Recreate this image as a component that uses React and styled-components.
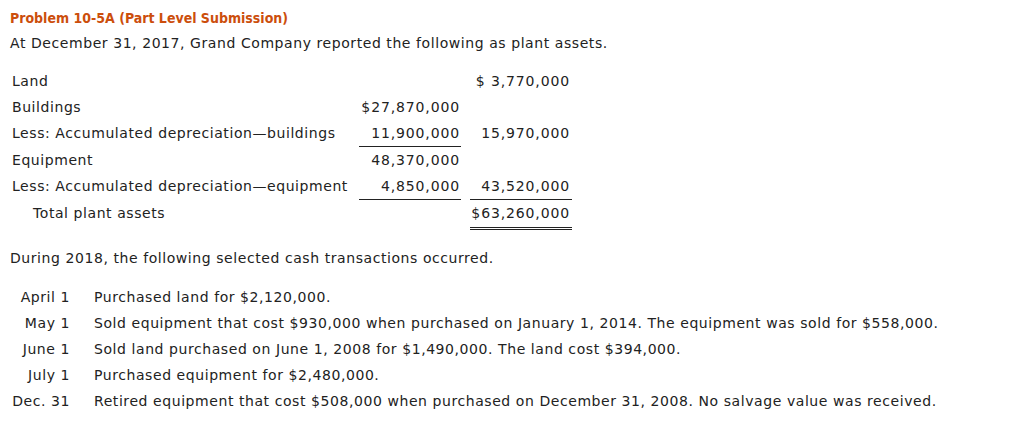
import React from "react";
import styled, { createGlobalStyle } from "styled-components";

const Global = createGlobalStyle`
  html, body { margin: 0; padding: 0; background: #fff; }
  body {
    font-family: Verdana, "DejaVu Sans", sans-serif;
    font-size: 14px;
    letter-spacing: 0.57px;
    color: #222;
  }
`;

const Page = styled.div`
  padding: 8px 10px;
`;

const Title = styled.h2`
  margin: 0;
  font-family: "DejaVu Sans Condensed", "DejaVu Sans", sans-serif;
  font-size: 14px;
  letter-spacing: 0;
  font-weight: bold;
  color: #cc4e0c;
  line-height: 20px;
`;

const Para = styled.p`
  margin: ${(p) => p.$mt || 0}px 0 0 0;
  line-height: 20px;
`;

const Table = styled.div`
  display: grid;
  grid-template-columns: 338px 102px 102px;
  column-gap: 9px;
  margin: 15px 0 0 2px;
  width: max-content;
`;

const Cell = styled.div`
  height: 26px;
  line-height: 26px;
  box-sizing: border-box;
  white-space: nowrap;
  padding-left: ${(p) => p.$indent || 0}px;
`;

const Num = styled(Cell)`
  text-align: right;
  letter-spacing: 0.87px;
  padding-right: ${(p) => p.$pr ?? 1}px;
  border-bottom: ${(p) => (p.$rule ? "1px solid #222" : "none")};
  height: ${(p) => (p.$rule ? 27 : 26)}px;
`;

const Total = styled(Num)`
  border-bottom: 3px double #222;
  height: 30px;
  line-height: 27px;
`;

const Tx = styled.div`
  display: grid;
  grid-template-columns: 60px auto;
  column-gap: 24px;
  margin-top: 16px;
`;

const Date = styled.div`
  text-align: right;
  line-height: 26px;
  white-space: nowrap;
`;

const Desc = styled.div`
  line-height: 26px;
  white-space: nowrap;
`;

const rows = [
  { label: "Land", a: "", b: "$ 3,770,000" },
  { label: "Buildings", a: "$27,870,000", b: "" },
  { label: "Less: Accumulated depreciation\u2014buildings", a: "11,900,000", b: "15,970,000", ruleA: true },
  { label: "Equipment", a: "48,370,000", b: "" },
  { label: "Less: Accumulated depreciation\u2014equipment", a: "4,850,000", b: "43,520,000", ruleA: true, ruleB: true },
];

const tx = [
  ["April 1", "Purchased land for $2,120,000."],
  ["May 1", "Sold equipment that cost $930,000 when purchased on January 1, 2014. The equipment was sold for $558,000."],
  ["June 1", "Sold land purchased on June 1, 2008 for $1,490,000. The land cost $394,000."],
  ["July 1", "Purchased equipment for $2,480,000."],
  ["Dec. 31", "Retired equipment that cost $508,000 when purchased on December 31, 2008. No salvage value was received."],
];

export default function App() {
  return (
    <Page>
      <Global />
      <Title>Problem 10-5A (Part Level Submission)</Title>
      <Para $mt={5}>At December 31, 2017, Grand Company reported the following as plant assets.</Para>
      <Table>
        {rows.map((r) => (
          <React.Fragment key={r.label}>
            <Cell>{r.label}</Cell>
            <Num $rule={r.ruleA}>{r.a}</Num>
            <Num $rule={r.ruleB} $pr={2}>{r.b}</Num>
          </React.Fragment>
        ))}
        <Cell $indent={21}>Total plant assets</Cell>
        <Num />
        <Total $pr={2}>$63,260,000</Total>
      </Table>
      <Para $mt={18}>During 2018, the following selected cash transactions occurred.</Para>
      <Tx>
        {tx.map(([d, t]) => (
          <React.Fragment key={d}>
            <Date>{d}</Date>
            <Desc>{t}</Desc>
          </React.Fragment>
        ))}
      </Tx>
    </Page>
  );
}
